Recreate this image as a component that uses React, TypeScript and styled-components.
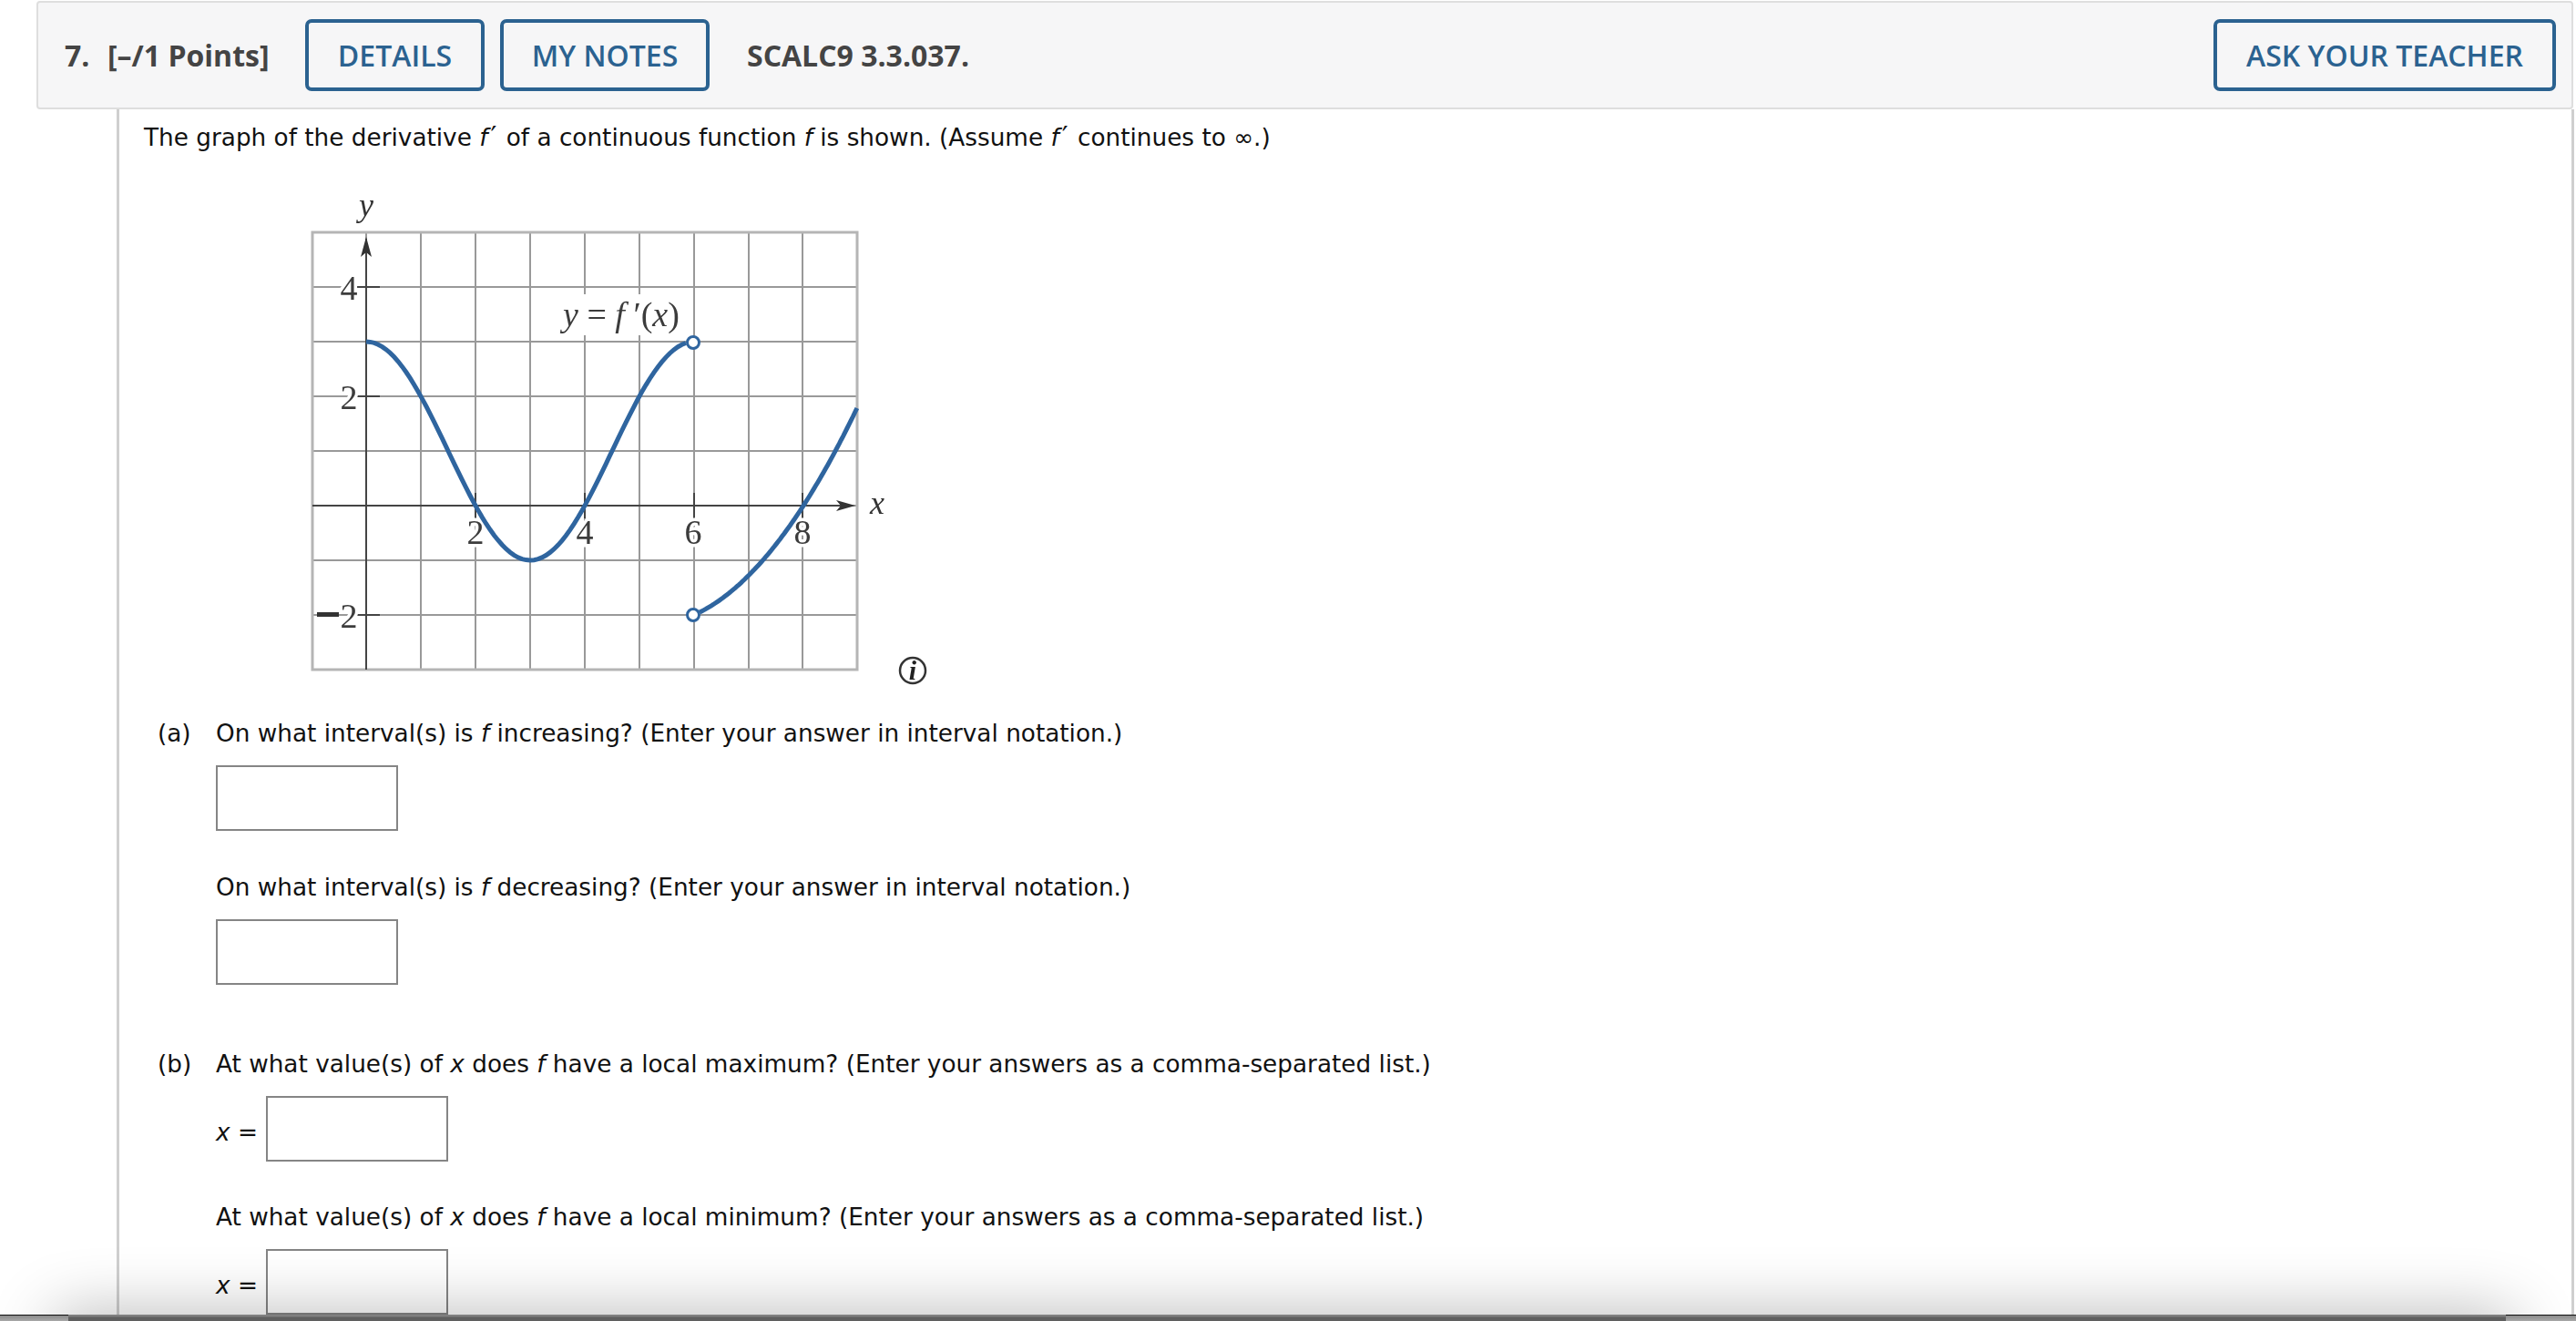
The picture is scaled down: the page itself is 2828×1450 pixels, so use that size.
import styled, { createGlobalStyle } from "styled-components";

const GlobalStyle = createGlobalStyle`
  html, body {
    margin: 0;
    padding: 0;
    background: #fff;
  }
`;

const Page = styled.div`
  position: relative;
  width: 2828px;
  height: 1450px;
  overflow: hidden;
  padding-top: 1px;
  box-sizing: border-box;
  font-family: "DejaVu Sans", Verdana, sans-serif;
  color: #111;
`;

const QuestionBar = styled.div`
  display: flex;
  align-items: center;
  box-sizing: border-box;
  height: 119px;
  margin-left: 40px;
  margin-right: 3px;
  padding: 0 17px 0 29px;
  background: #f6f6f7;
  border: 2px solid #dedede;
  border-radius: 4px;
  font-family: "Open Sans", sans-serif;
  font-size: 32px;
  font-weight: 600;
  color: #444;
`;

const QuestionNumber = styled.span`
  width: 47px;
  font-weight: 700;
`;

const Points = styled.span`
  width: 217px;
  font-weight: 700;
`;

const OutlineButton = styled.button<{ $wide: number; $push?: boolean }>`
  box-sizing: border-box;
  width: ${(p) => p.$wide}px;
  height: 79px;
  margin-right: ${(p) => (p.$push ? "0" : "17px")};
  margin-left: ${(p) => (p.$push ? "auto" : "0")};
  padding: 0;
  background: transparent;
  border: 4px solid #2b6290;
  border-radius: 7px;
  font-family: "Open Sans", sans-serif;
  font-size: 32px;
  font-weight: 600;
  color: #2b6290;
`;

const BookRef = styled.span`
  margin-left: 24px;
  font-size: 32px;
  font-weight: 700;
`;

const Panel = styled.div`
  box-sizing: border-box;
  height: 1340px;
  margin-left: 128px;
  margin-right: 2px;
  padding: 12px 0 0 27px;
  border-left: 3px solid #cfcfcf;
  border-right: 3px solid #cfcfcf;
  font-size: 26.3px;
`;

const TextLine = styled.div<{ $top?: number; $indent?: number }>`
  height: 36px;
  line-height: 38px;
  margin-top: ${(p) => p.$top ?? 0}px;
  margin-left: ${(p) => p.$indent ?? 0}px;
  white-space: nowrap;
`;

const PartTag = styled.span`
  display: inline-block;
  width: 64px;
`;

const Var = styled.i`
  font-style: italic;
`;

const Prime = styled.span`
  margin-left: 3px;
  margin-right: 2px;
  font-size: 1.15em;
  line-height: 0;
`;

const Figure = styled.svg`
  display: block;
  width: 690px;
  height: 560px;
  margin: 37px 0 0 182px;
  filter: blur(0.5px);
`;

const AnswerRow = styled.div<{ $top: number }>`
  display: flex;
  align-items: center;
  height: 72px;
  margin-top: ${(p) => p.$top}px;
  margin-left: 79px;
`;

const AnswerLabel = styled.span`
  width: 55px;
  padding-top: 8px;
`;

const AnswerBox = styled.div`
  box-sizing: border-box;
  width: 200px;
  height: 72px;
  background: #fff;
  border: 2px solid #858585;
`;

const BottomShade = styled.div`
  position: absolute;
  left: 60px;
  right: 70px;
  bottom: -60px;
  height: 60px;
  box-shadow: 0 -7px 70px rgba(0, 0, 0, 0.3);
`;

const BottomEdge = styled.div`
  position: absolute;
  left: 0;
  right: 0;
  bottom: 0;
  height: 7px;
  display: flex;
`;

const EdgeCorner = styled.div<{ $w: number }>`
  width: ${(p) => p.$w}px;
  box-sizing: border-box;
  border-top: 1px solid #111;
  background: linear-gradient(#8a8a8a, #a8a8a8);
`;

const EdgeMiddle = styled.div`
  flex: 1;
  background: linear-gradient(#7f7f7f 0, #7f7f7f 2px, #5f5f5f 3px, #5f5f5f 100%);
`;

const gridX = [343, 402, 462, 522, 582, 642, 702, 762, 822, 881, 941];
const gridY = [255, 315, 375, 435, 495, 555, 615, 675, 735];

const BLUE = "#2f659f";
const sx = (x: number) => 402 + x * 60;
const sy = (v: number) => 555 - v * 60;

function curve(from: number, to: number, fn: (x: number) => number) {
  const pts: string[] = [];
  for (let i = 0; i <= 80; i++) {
    const x = from + ((to - from) * i) / 80;
    pts.push(`${sx(x).toFixed(1)},${sy(fn(x)).toFixed(1)}`);
  }
  return pts.join(" ");
}

const firstPiece = curve(0, 5.85, (x) => 1 + 2 * Math.cos((Math.PI * x) / 3));
const secondPiece = curve(6.1, 8.98, (x) => {
  const t = x - 6;
  return -2 + 0.45 * t + 0.275 * t * t;
});

const labelStyle = {
  fontFamily: '"Liberation Serif", serif',
  fill: "#3c3c3c",
  stroke: "#fff",
  strokeWidth: 7,
  paintOrder: "stroke",
} as const;

function DerivativeGraph() {
  return (
    <Figure viewBox="340 205 690 560">
      {gridX.slice(1, -1).map((x) => (
        <line key={x} x1={x} x2={x} y1={255} y2={735} stroke="#999" strokeWidth={2} />
      ))}
      {gridY.slice(1, -1).map((y) => (
        <line key={y} x1={343} x2={941} y1={y} y2={y} stroke="#999" strokeWidth={2} />
      ))}
      <rect x={343} y={255} width={598} height={480} fill="none" stroke="#b5b5b5" strokeWidth={3} />

      {/* axes and ticks */}
      <line x1={402} x2={402} y1={262} y2={735} stroke="#444" strokeWidth={2} />
      <line x1={343} x2={930} y1={555} y2={555} stroke="#444" strokeWidth={2} />
      <path d="M402 260 L408 282 L402 277 L396 282 Z" fill="#333" />
      <path d="M939 555 L918 549 L923 555 L918 561 Z" fill="#333" />
      {[315, 435, 675].map((y) => (
        <line key={y} x1={387} x2={417} y1={y} y2={y} stroke="#444" strokeWidth={2} />
      ))}
      {[522, 642, 762, 881].map((x) => (
        <line key={x} x1={x} x2={x} y1={541} y2={569} stroke="#444" strokeWidth={2} />
      ))}

      {/* tick numbers */}
      <g {...labelStyle} fontSize={38} textAnchor="middle">
        <text x={383} y={329}>4</text>
        <text x={383} y={449}>2</text>
        <text x={383} y={689}>2</text>
        <text x={522} y={597}>2</text>
        <text x={642} y={597}>4</text>
        <text x={761} y={597}>6</text>
        <text x={881} y={597}>8</text>
      </g>
      <rect x={348} y={672} width={24} height={5} fill="#333" />
      <text x={402} y={237} fontSize={36} fontStyle="italic" textAnchor="middle" fontFamily='"Liberation Serif", serif' fill="#333">y</text>
      <text x={963} y={564} fontSize={36} fontStyle="italic" textAnchor="middle" fontFamily='"Liberation Serif", serif' fill="#333">x</text>

      {/* the curve label sits on a clear patch, the grid stops around it */}
      <rect x={612} y={323} width={142} height={45} fill="#fff" />
      <text x={618} y={358} fontSize={38} {...labelStyle} strokeWidth={6}>
        <tspan fontStyle="italic">y</tspan> = <tspan fontStyle="italic">f</tspan> ′(<tspan fontStyle="italic">x</tspan>)
      </text>

      <polyline points={firstPiece} fill="none" stroke={BLUE} strokeWidth={5} />
      <polyline points={secondPiece} fill="none" stroke={BLUE} strokeWidth={5} />
      <circle cx={761} cy={376} r={6.5} fill="#fff" stroke={BLUE} strokeWidth={3} />
      <circle cx={761} cy={675} r={6.5} fill="#fff" stroke={BLUE} strokeWidth={3} />

      {/* image description marker */}
      <circle cx={1002} cy={736} r={14} fill="#fff" stroke="#333" strokeWidth={2.5} />
      <text x={1002} y={746} fontSize={30} fontWeight={700} fontStyle="italic" textAnchor="middle" fontFamily='"Liberation Serif", serif' fill="#222">i</text>
    </Figure>
  );
}

export default function App() {
  return (
    <Page>
      <GlobalStyle />
      <QuestionBar>
        <QuestionNumber>7.</QuestionNumber>
        <Points>[–/1 Points]</Points>
        <OutlineButton $wide={197}>DETAILS</OutlineButton>
        <OutlineButton $wide={230}>MY NOTES</OutlineButton>
        <BookRef>SCALC9 3.3.037.</BookRef>
        <OutlineButton $wide={376} $push>ASK YOUR TEACHER</OutlineButton>
      </QuestionBar>
      <Panel>
        <TextLine>
          The graph of the derivative <Var>f</Var><Prime>′</Prime> of a continuous function <Var>f</Var> is shown. (Assume <Var>f</Var><Prime>′</Prime> continues to ∞.)
        </TextLine>
        <DerivativeGraph />

        <TextLine $top={21} $indent={15}>
          <PartTag>(a)</PartTag>On what interval(s) is <Var>f</Var> increasing? (Enter your answer in interval notation.)
        </TextLine>
        <AnswerRow $top={18}>
          <AnswerBox />
        </AnswerRow>
        <TextLine $top={43} $indent={79}>
          On what interval(s) is <Var>f</Var> decreasing? (Enter your answer in interval notation.)
        </TextLine>
        <AnswerRow $top={18}>
          <AnswerBox />
        </AnswerRow>

        <TextLine $top={68} $indent={15}>
          <PartTag>(b)</PartTag>At what value(s) of <Var>x</Var> does <Var>f</Var> have a local maximum? (Enter your answers as a comma-separated list.)
        </TextLine>
        <AnswerRow $top={18}>
          <AnswerLabel><Var>x</Var> =</AnswerLabel>
          <AnswerBox />
        </AnswerRow>
        <TextLine $top={42} $indent={79}>
          At what value(s) of <Var>x</Var> does <Var>f</Var> have a local minimum? (Enter your answers as a comma-separated list.)
        </TextLine>
        <AnswerRow $top={18}>
          <AnswerLabel><Var>x</Var> =</AnswerLabel>
          <AnswerBox />
        </AnswerRow>
      </Panel>
      <BottomShade />
      <BottomEdge>
        <EdgeCorner $w={75} />
        <EdgeMiddle />
        <EdgeCorner $w={77} />
      </BottomEdge>
    </Page>
  );
}
